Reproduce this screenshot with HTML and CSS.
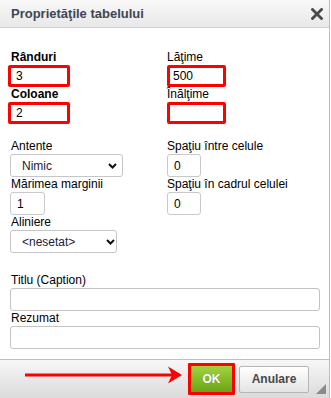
FILE: index.html
```html
<!DOCTYPE html>
<html lang="ro">
<head>
  <meta charset="UTF-8">
  <title>Proprietăţile tabelului</title>
  <link rel="stylesheet" href="styles.css">
</head>
<body>

  <div class="dialog">
    <div class="titlebar">
      <span class="title">Proprietăţile tabelului</span>
      <a class="close" title="Închide">
        <svg width="12" height="12" viewBox="0 0 12 12">
          <path d="M1.5 1.5 L10.5 10.5 M10.5 1.5 L1.5 10.5" stroke="#4a4a4a" stroke-width="2.8" stroke-linecap="square"/>
        </svg>
      </a>
    </div>

    <div class="contents">
      <div class="grid">
        <div class="field">
          <label class="strong" for="rows">Rânduri</label>
          <input class="marked left" type="text" id="rows" value="3">
        </div>
        <div class="field">
          <label for="width">Lăţime</label>
          <input class="marked right" type="text" id="width" value="500">
        </div>
        <div class="field">
          <label class="strong" for="cols">Coloane</label>
          <input class="marked left" type="text" id="cols" value="2">
        </div>
        <div class="field">
          <label for="height">Înălţime</label>
          <input class="marked right" type="text" id="height" value="">
        </div>
      </div>

      <div class="grid section">
        <div class="col">
          <label for="headers">Antente</label>
          <div class="select-wrap w113">
            <select id="headers">
              <option>Nimic</option>
              <option>Primul rând</option>
              <option>Prima coloană</option>
              <option>Ambele</option>
            </select>
            <svg class="chevron" width="9" height="6" viewBox="0 0 9 6">
              <path d="M1 1 L4.5 4.5 L8 1" fill="none" stroke="#111" stroke-width="2"/>
            </svg>
          </div>
          <label for="border">Mărimea marginii</label>
          <input class="small" type="text" id="border" value="1">
          <label for="align">Aliniere</label>
          <div class="select-wrap w107">
            <select id="align">
              <option>&lt;nesetat&gt;</option>
              <option>Stânga</option>
              <option>Centru</option>
              <option>Dreapta</option>
            </select>
            <svg class="chevron" width="9" height="6" viewBox="0 0 9 6">
              <path d="M1 1 L4.5 4.5 L8 1" fill="none" stroke="#111" stroke-width="2"/>
            </svg>
          </div>
        </div>
        <div class="col">
          <label for="spacing">Spaţiu între celule</label>
          <input class="small" type="text" id="spacing" value="0">
          <label for="padding">Spaţiu în cadrul celulei</label>
          <input class="small" type="text" id="padding" value="0">
        </div>
      </div>

      <div class="section wide">
        <label for="caption">Titlu (Caption)</label>
        <input class="full" type="text" id="caption">
        <label for="summary">Rezumat</label>
        <input class="full" type="text" id="summary">
      </div>
    </div>

    <div class="footer">
      <button class="btn ok">OK</button>
      <button class="btn cancel">Anulare</button>
      <span class="resize"></span>
    </div>

    <svg class="arrow" width="200" height="24" viewBox="0 0 200 24">
      <line x1="25" y1="12" x2="174" y2="12" stroke="#f00" stroke-width="3"/>
      <path d="M168 3.5 L182 12 L168 20.5 L172 12 Z" fill="#f00"/>
    </svg>
  </div>

</body>
</html>
```

FILE: styles.css
```css
body {
  margin: 0;
  background-color: #fff;
  font-family: "Liberation Sans", Arial, sans-serif;
  font-size: 12px;
  color: #000;
}

.dialog {
  position: relative;
  width: 330px;
  height: 398px;
  box-sizing: border-box;
  border-right: 1px solid #bcbcbc;
  background-color: #fff;
}

/* title bar */
.titlebar {
  height: 27px;
  border-bottom: 1px solid #d1d1d1;
  background: linear-gradient(#f8f8f8, #e8e8e8);
  display: flex;
  align-items: center;
  justify-content: space-between;
  padding: 0 6px 0 11px;
}

.title {
  font-size: 13px;
  font-weight: bold;
  color: #3e4553;
  line-height: 27px;
}

.close {
  display: flex;
  width: 12px;
  height: 12px;
  margin-top: 0;
  cursor: pointer;
}

/* contents */
.contents {
  height: 331px;
  box-sizing: border-box;
  padding: 22px 10px 10px 10px;
}

.grid {
  display: grid;
  grid-template-columns: 157px 1fr;
}

.section {
  margin-top: 15px;
}

.wide {
  margin-top: 20px;
}

.field,
.col,
.wide {
  display: flex;
  flex-direction: column;
  align-items: flex-start;
}

label {
  display: block;
  line-height: 15px;
  padding-left: 1px;
}

.col label,
.field label {
  white-space: nowrap;
}

.grid .col:nth-child(2) label,
.grid .field:nth-child(even) label {
  padding-left: 0;
}

.strong {
  font-weight: bold;
}

input {
  font-family: "Liberation Sans", Arial, sans-serif;
  font-size: 12px;
  color: #000;
  background-color: #fff;
  box-sizing: border-box;
  margin: 0;
  outline: none;
}

/* inputs highlighted with a red frame */
.marked {
  height: 22px;
  border: 3px solid #f00;
  border-radius: 2px;
  padding: 0 5px;
}

.marked.left {
  width: 62px;
  margin-left: -2px;
}

.marked.right {
  width: 59px;
  padding-left: 3px;
}

.small {
  width: 35px;
  height: 23px;
  border: 1px solid #c9c9c9;
  border-radius: 3px;
  padding: 0 6px;
}

.col:nth-child(2) .small {
  width: 34px;
}

.full {
  width: 310px;
  height: 23px;
  border: 1px solid #c3c3c3;
  border-radius: 3px;
}

/* selects */
.select-wrap {
  position: relative;
  height: 23px;
}

.w113 {
  width: 113px;
}

.w107 {
  width: 107px;
}

.select-wrap select {
  appearance: none;
  -webkit-appearance: none;
  width: 100%;
  height: 23px;
  margin: 0;
  border: 1px solid #c6c6c6;
  border-radius: 3px;
  background-color: #fff;
  padding: 0 0 0 11px;
  font-family: "Liberation Sans", Arial, sans-serif;
  font-size: 12px;
  color: #1b1b3a;
  outline: none;
}

.chevron {
  position: absolute;
  right: 6px;
  top: 9px;
  pointer-events: none;
}

.w107 .chevron {
  right: 2px;
}

/* footer */
.footer {
  position: relative;
  height: 38px;
  border-top: 1px solid #bfbfbf;
  background: linear-gradient(#f7f7f7, #dadada);
  display: flex;
  align-items: center;
  justify-content: flex-end;
  padding: 0 20px 1px 0;
}

.btn {
  font-family: "Liberation Sans", Arial, sans-serif;
  font-size: 12px;
  font-weight: bold;
  box-sizing: border-box;
  cursor: pointer;
}

.ok {
  width: 47px;
  height: 32px;
  border: 3px solid #f00;
  border-radius: 1px;
  background: linear-gradient(#a2d33d, #6aa515);
  color: #fff;
  text-shadow: 0 0 1px rgba(0, 0, 0, 0.25);
  margin-right: 4px;
  padding: 0;
}

.cancel {
  width: 70px;
  height: 27px;
  border: 1px solid #b6b6b6;
  border-radius: 2px;
  background: linear-gradient(#fff, #e4e4e4);
  color: #474747;
  padding: 0;
}

.resize {
  position: absolute;
  right: 3px;
  bottom: 5px;
  width: 0;
  height: 0;
  border-left: 10px solid transparent;
  border-bottom: 10px solid #8a8a8a;
}

.arrow {
  position: absolute;
  left: 0;
  top: 363px;
}
```
